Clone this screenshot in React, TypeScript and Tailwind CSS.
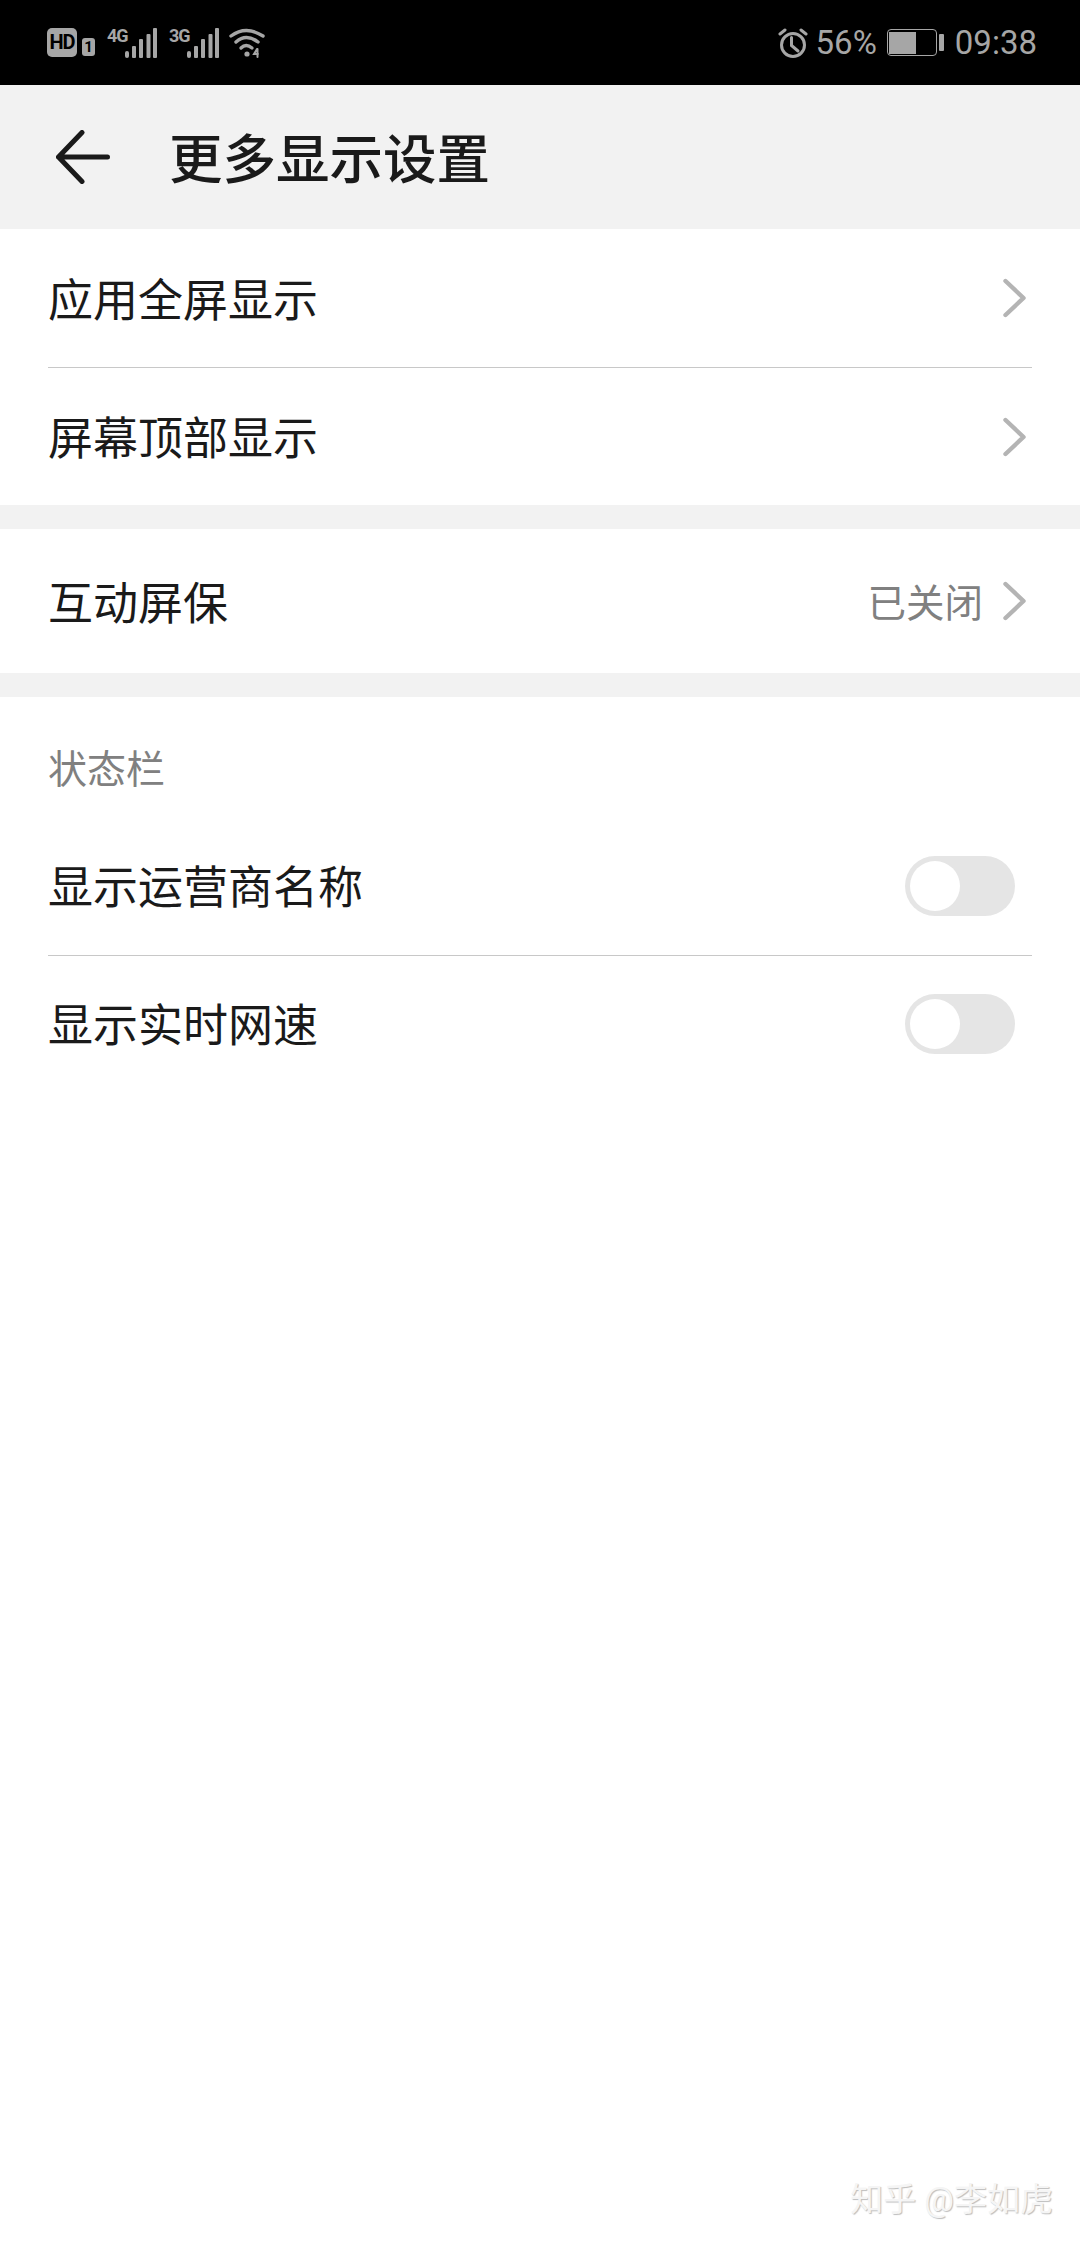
const cjk = "font-['Roboto','Noto_Sans_CJK_SC',sans-serif]";

function Chevron() {
  return (
    <svg width="26" height="42" viewBox="0 0 26 42" fill="none" className="shrink-0">
      <path d="M4.5 4 L22.5 21 L4.5 38" stroke="#b4b4b4" strokeWidth="4.4" strokeLinecap="round" strokeLinejoin="round" />
    </svg>
  );
}

function Toggle() {
  return (
    <div className="w-[110px] h-[60px] rounded-full bg-[#e5e5e5] p-[5px] mr-[3px] shrink-0">
      <div className="w-[50px] h-[50px] rounded-full bg-white" />
    </div>
  );
}

function Divider() {
  return <div className="h-px bg-[#c8c8c8] mx-[48px]" />;
}

function LinkRow({ label, value, height }: { label: string; value?: string; height: string }) {
  return (
    <div className={`flex items-center pl-[48px] pr-[53px] ${height}`}>
      <span className="flex-1 pt-[6px] text-[45px] leading-none text-[#1a1a1a]">{label}</span>
      {value && <span className="pt-[7px] text-[38.5px] leading-none text-[#808080] mr-[18px]">{value}</span>}
      <Chevron />
    </div>
  );
}

function ToggleRow({ label, height }: { label: string; height: string }) {
  return (
    <div className={`flex items-center pl-[48px] pr-[62px] ${height}`}>
      <span className="flex-1 pt-[5px] text-[45px] leading-none text-[#1a1a1a]">{label}</span>
      <Toggle />
    </div>
  );
}

function Signal() {
  return (
    <svg width="32" height="30" viewBox="0 0 32 30" fill="#a6a6a6" className="self-end">
      <rect x="0" y="23" width="4" height="7" rx="2" />
      <rect x="7" y="18" width="4" height="12" rx="1" />
      <rect x="14" y="11" width="4" height="19" rx="1" />
      <rect x="21.5" y="6" width="4" height="24" rx="1" />
      <rect x="28" y="0" width="4" height="30" rx="1" />
    </svg>
  );
}

function NetworkGroup({ label }: { label: string }) {
  return (
    <div className="flex items-start w-[50px] h-[30px]">
      <span className="w-[18px] text-[18px] font-bold leading-[15px] font-['Roboto',sans-serif] tracking-[-1px]">{label}</span>
      <Signal />
    </div>
  );
}

function StatusBar() {
  return (
    <div className="h-[85px] bg-black flex items-center justify-between pl-[47px] pr-[43px] text-[#a6a6a6]">
      <div className="flex items-center h-full">
        <div className="w-[30px] h-[29px] rounded-[5px] bg-[#a6a6a6] text-black text-[20px] font-bold leading-[29px] text-center font-['Roboto',sans-serif] tracking-[-1px]">
          HD
        </div>
        <div className="w-[13px] h-[18px] rounded-[3px] bg-[#a6a6a6] text-black text-[15px] font-bold leading-[18px] text-center ml-[5px] mt-[9px] font-['Roboto',sans-serif]">
          1
        </div>
        <div className="ml-[12px]"><NetworkGroup label="4G" /></div>
        <div className="ml-[12px]"><NetworkGroup label="3G" /></div>
        <svg width="36" height="30" viewBox="0 0 36 30" fill="none" className="ml-[10px]" stroke="#a6a6a6" strokeWidth="3.4" strokeLinecap="round">
          <path d="M2 8 Q17 -3 34 8" />
          <path d="M7 14 Q17 5 29 14" />
          <path d="M12 20 Q17 15 23 20" />
          <circle cx="18" cy="26" r="2.6" fill="#a6a6a6" stroke="none" />
          <path d="M28 21 L25 26 H29 M28.5 21 V29" strokeWidth="2" />
        </svg>
      </div>
      <div className="flex items-center h-full font-['Roboto',sans-serif] text-[33px] leading-none">
        <svg width="30" height="30" viewBox="0 0 30 30" fill="none" stroke="#a6a6a6" strokeWidth="3" strokeLinecap="round" className="mr-[8px]">
          <circle cx="15" cy="17" r="11.5" />
          <path d="M13.5 9.5 V17.5 L20 23" />
          <path d="M2 6 L7 2 M28 6 L23 2" />
        </svg>
        <span>56%</span>
        <div className="flex items-center ml-[10px]">
          <div className="w-[50px] h-[27px] rounded-[4px] border-[1.5px] border-[#a6a6a6] p-[1.5px]">
            <div className="w-[27px] h-full bg-[#a6a6a6]" />
          </div>
          <div className="w-[5px] h-[17px] rounded-[1px] bg-[#a6a6a6] ml-[2px]" />
        </div>
        <span className="ml-[11px]">09:38</span>
      </div>
    </div>
  );
}

export default function App() {
  return (
    <div className={`${cjk} w-[1080px] h-[2244px] bg-white flex flex-col overflow-hidden`}>
      <StatusBar />
      <div className="h-[144px] bg-[#f2f2f2] flex items-center pl-[56px]">
        <svg width="54" height="54" viewBox="0 0 54 54" fill="none" stroke="#1a1a1a" strokeWidth="5" strokeLinecap="round" strokeLinejoin="round">
          <path d="M26 2.5 L2.5 27 L26 51.5 M2.5 27 H51.5" />
        </svg>
        <span className="ml-[59px] pt-[8px] text-[53.5px] leading-none font-medium text-[#1a1a1a]">更多显示设置</span>
      </div>

      <LinkRow label="应用全屏显示" height="h-[138px]" />
      <Divider />
      <LinkRow label="屏幕顶部显示" height="h-[137px]" />
      <div className="h-[24px] bg-[#f2f2f2]" />
      <LinkRow label="互动屏保" value="已关闭" height="h-[144px]" />
      <div className="h-[24px] bg-[#f2f2f2]" />

      <div className="h-[120px] pl-[48px] pt-[54px] text-[39px] leading-none text-[#808080]">状态栏</div>
      <ToggleRow label="显示运营商名称" height="h-[138px]" />
      <Divider />
      <ToggleRow label="显示实时网速" height="h-[136px]" />

      <div className="flex-1 flex items-end justify-end pr-[27px] pb-[28px]">
        <span className="text-[33px] leading-none text-[#f5f5f5] [text-shadow:1px_1px_1px_#bdbdbd]">知乎 @李如虎</span>
      </div>
    </div>
  );
}
